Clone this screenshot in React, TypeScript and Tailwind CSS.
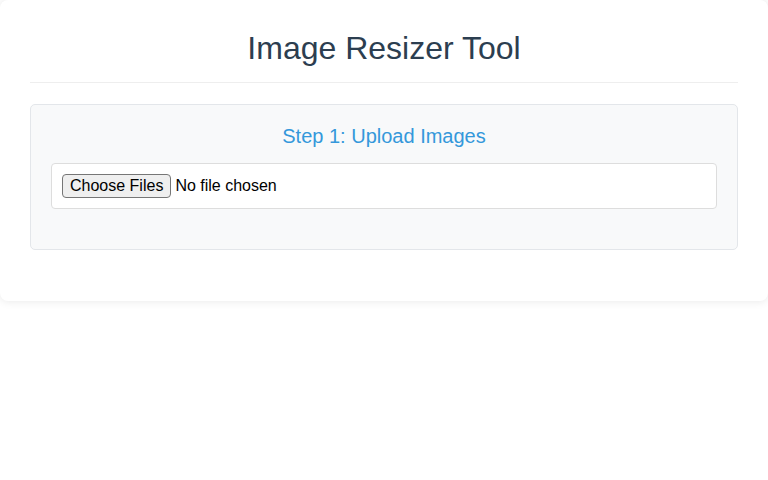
import React from "react";

export default function App() {
  return (
    <div className="min-h-screen bg-white font-['Liberation_Sans',Arial,sans-serif]">
      <div className="rounded-lg bg-white px-[30px] pt-[30px] pb-[31px] shadow-[0_0_10px_rgba(0,0,0,0.1)]">
        {/* Header */}
        <h1 className="mb-[21px] border-b border-[#eeeeee] pb-[15px] text-center text-[32px] leading-[37px] text-[#2c3e50]">
          Image Resizer Tool
        </h1>

        {/* Upload step */}
        <section className="mb-5 rounded-[5px] border border-[#e3e6ea] bg-[#f8f9fa] p-5">
          <h2 className="mb-[15px] text-center text-xl leading-[23px] text-[#3498db]">
            Step 1: Upload Images
          </h2>
          <div className="mb-5">
            <input
              type="file"
              multiple
              accept="image/*"
              className="block w-full rounded border border-[#dddddd] bg-white p-2.5 text-base leading-[24px] text-black file:mr-[4px] file:rounded-sm file:border file:border-solid file:border-[#767676] file:bg-[#efefef] file:px-[7px] file:py-px file:text-base file:leading-[20px] file:text-black"
            />
          </div>
        </section>
      </div>
    </div>
  );
}
